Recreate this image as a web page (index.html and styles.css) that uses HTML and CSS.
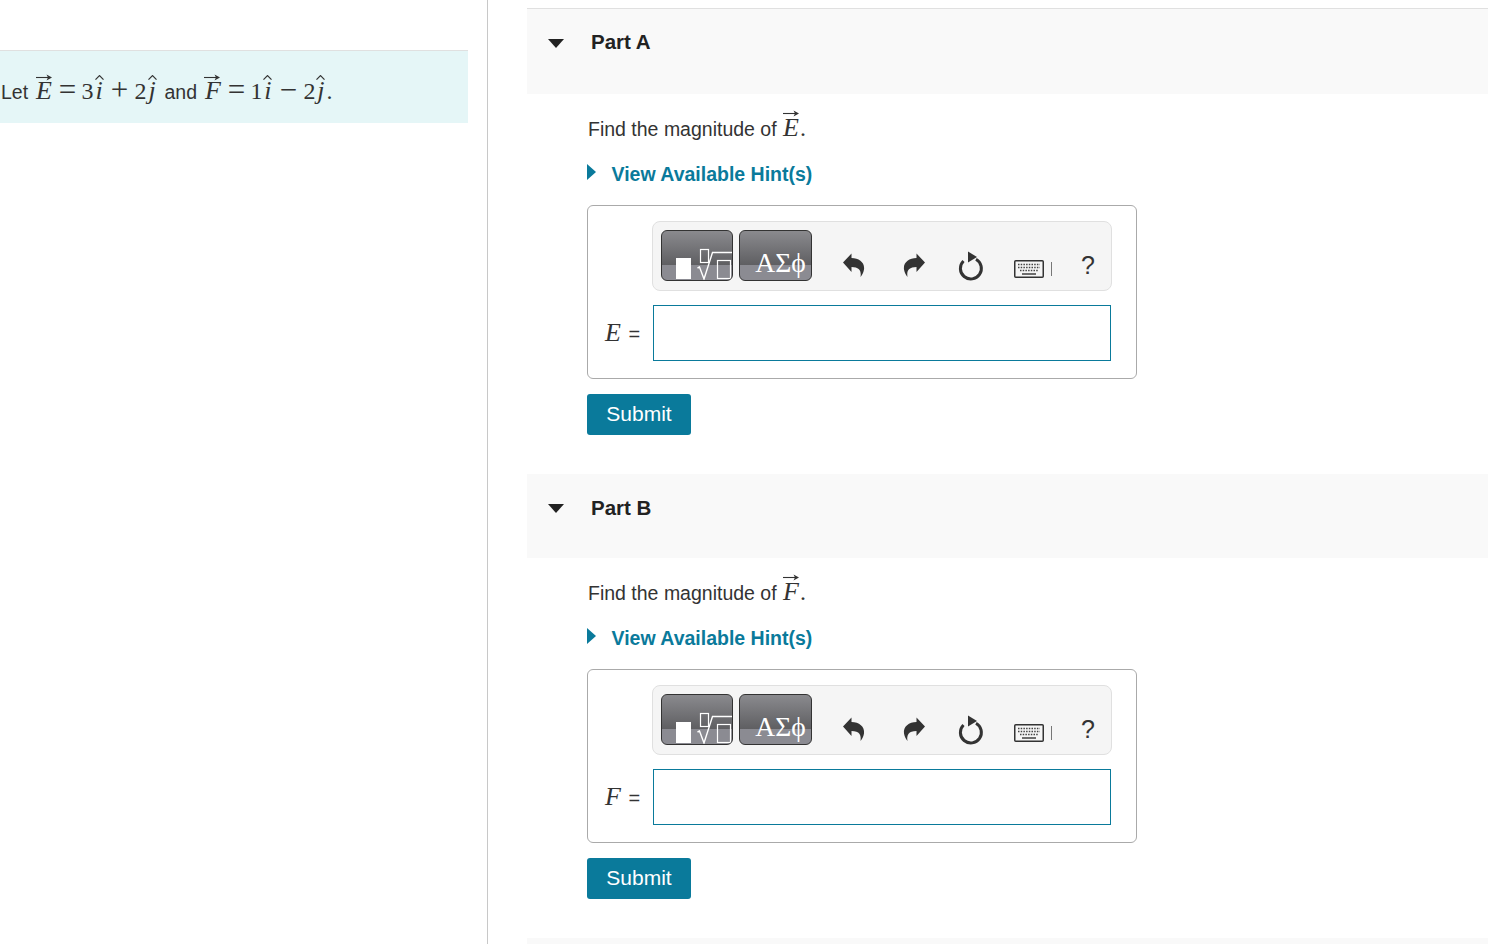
FILE: index.html
```html
<!DOCTYPE html>
<html lang="en">
<head>
<meta charset="utf-8">
<title>Vector magnitudes</title>
<link rel="stylesheet" href="styles.css">
</head>
<body>
<svg class="defs" width="0" height="0" aria-hidden="true">
  <symbol id="vec" viewBox="0 0 16 7"><path d="M0 3.5H14" stroke="#333" stroke-width="1.1" fill="none"/><path d="M10.5 .4 16 3.5 10.5 6.6 12 3.5Z" fill="#333"/></symbol>
  <symbol id="hat" viewBox="0 0 9 5"><path d="M.5 4.6 4.5 .6 8.5 4.6" stroke="#333" stroke-width="1.2" fill="none"/></symbol>
  <symbol id="undo" viewBox="0 0 24 26"><path d="M1 10.5 9.5 1.5V6C17 6 23 10.5 22 17.5 21.5 20.5 20 23 18.5 25 19.5 19 17.5 15 9.5 15V20Z" fill="#333"/></symbol>
  <symbol id="redo" viewBox="0 0 24 26"><path d="M23 10.5 14.5 1.5V6C7 6 1 10.5 2 17.5 2.5 20.5 4 23 5.5 25 4.5 19 6.5 15 14.5 15V20Z" fill="#333"/></symbol>
  <symbol id="reset" viewBox="0 0 30 32"><path d="M7.5 11A10.5 10.5 0 1 0 20 9.3" fill="none" stroke="#333" stroke-width="3"/><path d="M12 1.5 21 7 12 12.5Z" fill="#333"/></symbol>
  <symbol id="keys" viewBox="0 0 30 18"><rect x=".75" y=".75" width="28.5" height="16.5" rx="1" fill="#f5f5f5" stroke="#333" stroke-width="1.5"/><path d="M4 4.5H26M4 7.5H26M6 10.5H24" stroke="#444" stroke-width="1.4" stroke-dasharray="1.5 1.2"/><path d="M8 14H22" stroke="#333" stroke-width="1.4"/></symbol>
  <symbol id="radical" viewBox="0 0 36 32"><rect x="3.5" y="1.5" width="8" height="13" fill="none" stroke="#fff" stroke-width="1.2"/><path d="M.5 20 2.5 19 7 31 15.5 4.5H35" fill="none" stroke="#fff" stroke-width="1.4"/><rect x="20.5" y="12.5" width="13" height="18" fill="none" stroke="#fff" stroke-width="1.2"/></symbol>
</svg>
<div class="page">
  <aside class="intro">
    <div class="callout">
      <p class="callout-text">Let <span class="math math-lead"><span class="v"><svg class="arrow"><use href="#vec"/></svg><i>E</i></span><span class="op op-eq">=</span>3<span class="h"><svg class="hat"><use href="#hat"/></svg><i>i</i></span><span class="op">+</span>2<span class="h"><svg class="hat"><use href="#hat"/></svg><i>j</i></span></span> and <span class="math"><span class="v"><svg class="arrow"><use href="#vec"/></svg><i>F</i></span><span class="op op-eq">=</span>1<span class="h"><svg class="hat"><use href="#hat"/></svg><i>i</i></span><span class="op">−</span>2<span class="h"><svg class="hat"><use href="#hat"/></svg><i>j</i></span>.</span></p>
    </div>
  </aside>
  <main class="parts">
    <section class="part part-first">
      <header class="part-head"><span class="caret-down"></span><h2 class="part-title">Part A</h2></header>
      <div class="part-body">
        <p class="question">Find the magnitude of <span class="math"><span class="v"><svg class="arrow"><use href="#vec"/></svg><i>E</i></span>.</span></p>
        <a class="hint"><span class="caret-right"></span>View Available Hint(s)</a>
        <div class="answer">
          <div class="toolbar">
            <div class="tool tool-wide"><span class="sq"></span><svg class="root"><use href="#radical"/></svg></div>
            <div class="tool tool-greek">ΑΣϕ</div>
            <svg class="ico undo"><use href="#undo"/></svg>
            <svg class="ico redo"><use href="#redo"/></svg>
            <svg class="ico reset"><use href="#reset"/></svg>
            <svg class="ico keys"><use href="#keys"/></svg>
            <span class="sep"></span>
            <span class="help">?</span>
          </div>
          <div class="answer-row">
            <label class="var"><i>E</i> <span class="eq">=</span></label>
            <div class="field"></div>
          </div>
        </div>
        <button class="submit">Submit</button>
      </div>
    </section>
    <section class="part part-second">
      <header class="part-head"><span class="caret-down"></span><h2 class="part-title">Part B</h2></header>
      <div class="part-body">
        <p class="question">Find the magnitude of <span class="math"><span class="v"><svg class="arrow"><use href="#vec"/></svg><i>F</i></span>.</span></p>
        <a class="hint"><span class="caret-right"></span>View Available Hint(s)</a>
        <div class="answer">
          <div class="toolbar">
            <div class="tool tool-wide"><span class="sq"></span><svg class="root"><use href="#radical"/></svg></div>
            <div class="tool tool-greek">ΑΣϕ</div>
            <svg class="ico undo"><use href="#undo"/></svg>
            <svg class="ico redo"><use href="#redo"/></svg>
            <svg class="ico reset"><use href="#reset"/></svg>
            <svg class="ico keys"><use href="#keys"/></svg>
            <span class="sep"></span>
            <span class="help">?</span>
          </div>
          <div class="answer-row">
            <label class="var"><i>F</i> <span class="eq">=</span></label>
            <div class="field"></div>
          </div>
        </div>
        <button class="submit">Submit</button>
      </div>
    </section>
    <div class="next-strip"></div>
  </main>
</div>
</body>
</html>
```
FILE: styles.css
```css
* { box-sizing: border-box; }
html, body { margin: 0; height: 100%; }
body { height: 944px; overflow: hidden; background: #fff; color: #333; font-family: "Liberation Sans", Arial, sans-serif; font-size: 19.5px; }
.defs { position: absolute; }
.page { display: flex; height: 944px; }
.intro { width: 488px; flex: none; border-right: 1px solid #c8c8c8; padding: 50px 19px 0 0; }
.callout { height: 73px; background: #e5f6f7; border-top: 1px solid #e0e0e0; padding-left: 1px; display: flex; align-items: center; }
.callout-text { margin: 8px 0 0; white-space: nowrap; line-height: 30px; }
.math { font-family: "Liberation Serif", "Times New Roman", serif; font-size: 24px; }
.math-lead { margin-right: 1.5px; }
.math i { font-style: italic; font-size: 26px; }
.op { display: inline-block; width: 30px; text-align: center; font-size: 31px; line-height: 0; vertical-align: -1px; }
.op-eq { width: 28px; }
.v, .h { position: relative; display: inline-block; text-align: center; }
.v { width: 19px; margin-left: 1px; }
.question .v { width: 18px; margin-left: 0; }
.h { width: 11px; }
.arrow { position: absolute; left: 1px; top: -2px; width: 16px; height: 7px; }
.question .arrow { top: -3px; }
.hat { position: absolute; left: 1px; top: -1px; width: 9px; height: 5px; }
.parts { flex: 1; margin-left: 39px; padding-top: 8px; min-width: 0; }
.part { height: 464px; }
.part-head { height: 86px; background: #f9f9f9; display: flex; align-items: flex-start; padding: 22px 0 0 21px; }
.part-first .part-head { border-top: 1px solid #e0e0e0; padding-top: 21px; }
.part-second { padding-top: 2px; }
.part-second .part-head { height: 84px; }
.part-second .caret-down { margin-top: 8px; }
.caret-down { width: 0; height: 0; margin-top: 9px; border-left: 8px solid transparent; border-right: 8px solid transparent; border-top: 9px solid #222; }
.part-title { margin: 0 0 0 27px; font-size: 20.5px; line-height: 24px; font-weight: 700; color: #222; }
.part-body { padding: 0 0 0 60px; }
.question { margin: 0; padding: 19px 0 0 1px; height: 59px; line-height: 30px; white-space: nowrap; }
.hint { display: flex; align-items: center; height: 26px; margin-top: 8px; color: #0a7a9b; font-weight: 700; line-height: 26px; }
.caret-right { width: 0; height: 0; margin: -4px 15.5px 0 0; border-top: 8px solid transparent; border-bottom: 8px solid transparent; border-left: 9px solid #0a7a9b; }
.answer { width: 550px; height: 174px; margin-top: 18px; border: 1px solid #aaa; border-radius: 6px; padding: 15px 25px 0 17px; }
.toolbar { position: relative; width: 460px; height: 70px; margin-left: 47px; background: #f5f5f5; border: 1px solid #e0e0e0; border-radius: 8px; display: flex; align-items: flex-start; padding: 8px 0 0 8px; gap: 6px; }
.tool { height: 51px; border: 1px solid #333; border-radius: 6px; background: linear-gradient(#8a8a8e 0, #5f5f62 69%, #8b8b92 69%, #8b8b92 100%); color: #fff; position: relative; overflow: hidden; }
.tool-wide { width: 72px; }
.tool-greek { width: 73px; font-family: "Liberation Serif", serif; font-size: 27.5px; line-height: 64px; text-align: center; padding-left: 10px; white-space: nowrap; }
.sq { position: absolute; left: 14px; bottom: 1px; width: 15px; height: 21px; background: #fff; }
.root { position: absolute; left: 35px; top: 17px; width: 36px; height: 32px; }
.ico { position: absolute; display: block; }
.undo { left: 189px; top: 30px; width: 24px; height: 26px; }
.redo { left: 249px; top: 30px; width: 24px; height: 26px; }
.reset { left: 303px; top: 28px; width: 30px; height: 32px; }
.keys { left: 361px; top: 38px; width: 30px; height: 18px; }
.sep { position: absolute; left: 398px; top: 40px; width: 1px; height: 14px; background: #777; }
.help { position: absolute; left: 428px; top: 28px; font-size: 25px; line-height: 30px; color: #333; }
.answer-row { display: flex; align-items: center; margin-top: 14px; height: 56px; }
.var { width: 48px; flex: none; white-space: nowrap; font-size: 20px; line-height: 26px; }
.var i { font-family: "Liberation Serif", serif; font-size: 26px; }
.eq { font-family: "Liberation Sans", sans-serif; margin-left: 2px; }
.field { width: 458px; height: 56px; background: #fff; border: 1px solid #0a7a9b; }
.submit { display: block; width: 104px; height: 41px; margin-top: 15px; padding: 0 0 2px; border: 0; border-radius: 3px; background: #0a7a9b; color: #fff; font: 400 21px/39px "Liberation Sans", Arial, sans-serif; }
.next-strip { height: 20px; margin-top: 2px; background: #f9f9f9; }
```
